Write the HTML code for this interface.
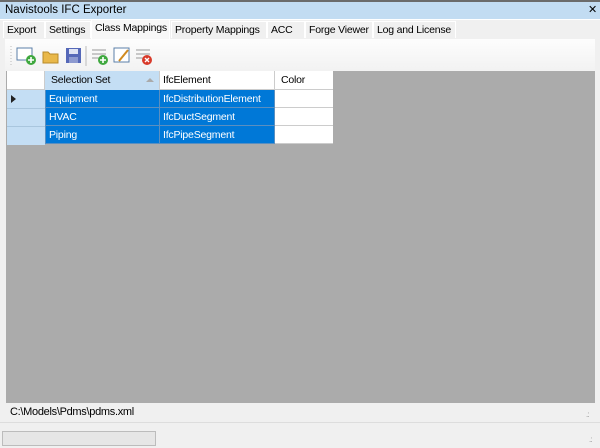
<!DOCTYPE html>
<html><head><style>
*{margin:0;padding:0;box-sizing:border-box}
body{width:600px;height:448px;background:#f0f0f0;font-family:"Liberation Sans",sans-serif;font-size:10.5px;color:#000;position:relative;overflow:hidden}
.a{position:absolute}
.tab{position:absolute;top:21px;height:17px;line-height:16px;padding:0 3px;background:#f0f0f0;border:1px solid #fff;border-bottom:none;white-space:nowrap;overflow:hidden;letter-spacing:-0.2px}
.c{position:absolute;height:18px;line-height:18px;padding-left:3px;white-space:nowrap;overflow:hidden;letter-spacing:-0.2px}
</style></head><body>
<div class="a" style="left:0;top:0;width:600px;height:2px;background:#6b6b6b"></div>
<div class="a" style="left:0;top:2px;width:600px;height:17px;background:#c2dcf2;line-height:17px;padding-left:5px;font-size:11.5px">Navistools IFC Exporter</div>
<div class="a" style="left:588px;top:2px;font-size:11px;line-height:17px">✕</div>
<div class="a" style="left:0;top:19px;width:600px;height:1px;background:#fff"></div>
<div class="tab" style="left:3px;width:42px">Export</div>
<div class="tab" style="left:45px;width:46px">Settings</div>
<div class="tab" style="left:91px;top:19px;height:20px;width:79px;background:#f7f7f7;line-height:17px">Class Mappings</div>
<div class="tab" style="left:171px;width:96px">Property Mappings</div>
<div class="tab" style="left:267px;width:38px">ACC</div>
<div class="tab" style="left:305px;width:68px">Forge Viewer</div>
<div class="tab" style="left:373px;width:83px">Log and License</div>
<div class="a" style="left:5px;top:39px;width:590px;height:32px;background:linear-gradient(#fdfdfd,#f2f2f2)"></div>
<svg class="a" style="left:10px;top:44px" width="150" height="24">
<line x1="1" y1="2" x2="1" y2="22" stroke="#bbb" stroke-dasharray="1 2"/>
<rect x="7" y="4" width="15" height="12" fill="#fff" stroke="#5b7fa8"/><circle cx="21" cy="16" r="5" fill="#3fa83f"/><path d="M18 16h6M21 13v6" stroke="#fff" stroke-width="1.6"/>
<path d="M33 8h5l2 2h8v9H33z" fill="#e9b84a" stroke="#b88a2a"/>
<rect x="56" y="4" width="15" height="15" fill="#5568b8"/><rect x="59" y="5" width="9" height="5" fill="#dfe4f4"/><rect x="59" y="13" width="9" height="6" fill="#8d9ad0"/>
<line x1="76" y1="2" x2="76" y2="22" stroke="#bbb"/>
<path d="M82 6h14M82 10h14M82 14h10" stroke="#999"/><circle cx="93" cy="16" r="5" fill="#3fa83f"/><path d="M90 16h6M93 13v6" stroke="#fff" stroke-width="1.6"/>
<rect x="104" y="4" width="15" height="14" fill="#fff" stroke="#5b7fa8"/><path d="M109 17l9-11" stroke="#d08a20" stroke-width="2"/>
<path d="M126 6h14M126 10h14M126 14h10" stroke="#999"/><circle cx="137" cy="16" r="5" fill="#d83a2a"/><path d="M135 14l4 4M139 14l-4 4" stroke="#fff" stroke-width="1.4"/>
</svg>
<div class="a" style="left:6px;top:71px;width:589px;height:332px;background:#ababab"></div>
<div class="a" style="left:7px;top:71px;width:38px;height:74px;background:#c4def4"></div>
<div class="a" style="left:7px;top:71px;width:38px;height:19px;background:#fff;border-right:1px solid #ccc;border-bottom:1px solid #ccc"></div>
<div class="c" style="left:45px;top:71px;width:115px;height:19px;background:#c4def4;border-right:1px solid #ccc;padding-left:6px">Selection Set</div>
<div class="a" style="left:146px;top:78px;width:0;height:0;border-left:4px solid transparent;border-right:4px solid transparent;border-bottom:4px solid #aaa"></div>
<div class="c" style="left:160px;top:71px;width:115px;height:19px;background:#fff;border-right:1px solid #ccc;border-bottom:1px solid #ccc">IfcElement</div>
<div class="c" style="left:275px;top:71px;width:58px;height:19px;background:#fff;padding-left:6px;border-bottom:1px solid #ccc">Color</div>
<div class="a" style="left:11px;top:95px;width:0;height:0;border-top:4px solid transparent;border-bottom:4px solid transparent;border-left:5px solid #222"></div>
<div class="a" style="left:7px;top:108px;width:38px;height:1px;background:#a9c6de"></div>
<div class="a" style="left:7px;top:126px;width:38px;height:1px;background:#a9c6de"></div>
<div class="c" style="left:45px;top:90px;width:115px;background:#0078d7;color:#fff;border:1px solid #5a8fc0;border-top:none">Equipment</div>
<div class="c" style="left:160px;top:90px;width:115px;background:#0078d7;color:#fff;border:1px solid #5a8fc0;border-top:none;border-left:none">IfcDistributionElement</div>
<div class="c" style="left:275px;top:90px;width:58px;background:#fff;border-bottom:1px solid #ccc"></div>
<div class="c" style="left:45px;top:108px;width:115px;background:#0078d7;color:#fff;border:1px solid #5a8fc0;border-top:none">HVAC</div>
<div class="c" style="left:160px;top:108px;width:115px;background:#0078d7;color:#fff;border:1px solid #5a8fc0;border-top:none;border-left:none">IfcDuctSegment</div>
<div class="c" style="left:275px;top:108px;width:58px;background:#fff;border-bottom:1px solid #ccc"></div>
<div class="c" style="left:45px;top:126px;width:115px;background:#0078d7;color:#fff;border:1px solid #5a8fc0;border-top:none">Piping</div>
<div class="c" style="left:160px;top:126px;width:115px;background:#0078d7;color:#fff;border:1px solid #5a8fc0;border-top:none;border-left:none">IfcPipeSegment</div>
<div class="c" style="left:275px;top:126px;width:58px;background:#fff;border-bottom:1px solid #ccc"></div>
<div class="a" style="left:10px;top:406px;font-size:11px;letter-spacing:-0.3px">C:\Models\Pdms\pdms.xml</div>
<div class="a" style="left:0;top:422px;width:600px;height:1px;background:#ddd"></div>
<div class="a" style="left:2px;top:431px;width:154px;height:15px;background:#e6e6e6;border:1px solid #bcbcbc"></div>
<div class="a" style="left:586px;top:410px;color:#999;font-size:8px;letter-spacing:-1px">.:</div>
<div class="a" style="left:589px;top:435px;color:#999;font-size:8px;letter-spacing:-1px">.:</div>
</body></html>
